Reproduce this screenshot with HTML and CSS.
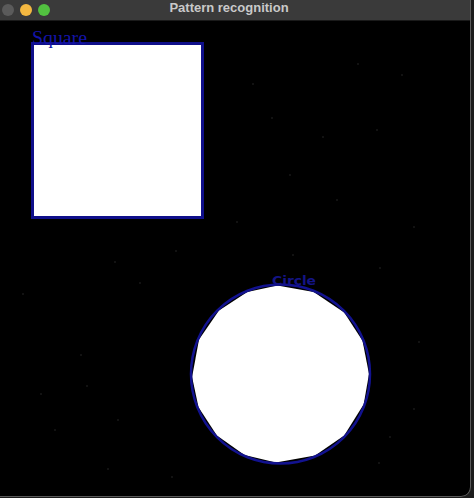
FILE: index.html
```html
<!DOCTYPE html>
<html>
<head>
<meta charset="utf-8">
<link rel="stylesheet" href="styles.css">
</head>
<body>
<div class="window">
  <div class="titlebar">
    <div class="lights">
      <span class="light grey"></span>
      <span class="light yellow"></span>
      <span class="light green"></span>
    </div>
    <div class="title">Pattern recognition</div>
  </div>
  <div class="canvas">
    <svg class="scene" width="469" height="474" viewBox="0 21 469 474" xmlns="http://www.w3.org/2000/svg">
      <rect x="0" y="21" width="469" height="474" fill="#000"/>
      <g fill="#2a2a2a">
        <circle cx="253" cy="84" r="0.8"/>
        <circle cx="358" cy="64" r="0.8"/>
        <circle cx="402" cy="75" r="0.8"/>
        <circle cx="272" cy="118" r="0.8"/>
        <circle cx="323" cy="137" r="0.8"/>
        <circle cx="377" cy="130" r="0.8"/>
        <circle cx="290" cy="175" r="0.8"/>
        <circle cx="337" cy="200" r="0.8"/>
        <circle cx="414" cy="227" r="0.8"/>
        <circle cx="237" cy="222" r="0.8"/>
        <circle cx="176" cy="251" r="0.8"/>
        <circle cx="115" cy="262" r="0.8"/>
        <circle cx="293" cy="255" r="0.8"/>
        <circle cx="380" cy="268" r="0.8"/>
        <circle cx="23" cy="294" r="0.8"/>
        <circle cx="140" cy="283" r="0.8"/>
        <circle cx="81" cy="355" r="0.8"/>
        <circle cx="87" cy="386" r="0.8"/>
        <circle cx="41" cy="394" r="0.8"/>
        <circle cx="118" cy="420" r="0.8"/>
        <circle cx="55" cy="430" r="0.8"/>
        <circle cx="419" cy="342" r="0.8"/>
        <circle cx="414" cy="409" r="0.8"/>
        <circle cx="390" cy="437" r="0.8"/>
        <circle cx="108" cy="469" r="0.8"/>
        <circle cx="172" cy="477" r="0.8"/>
        <circle cx="379" cy="463" r="0.8"/>
      </g>
      <rect x="32.5" y="43.5" width="170" height="174" fill="#fff" stroke="#0f0f8a" stroke-width="3"/>
      <text x="32" y="44" class="label-square" textLength="55" lengthAdjust="spacingAndGlyphs">Square</text>
      <polygon fill="#fff" points="369,374 363.7,404.3 344.2,435.5 315.1,455.5 275.9,462.4 244.5,454.9 216.9,435.5 198.5,407.2 192.1,377.1 199,339.4 219,310.4 247.3,292 277.4,285.6 313.7,292 344.2,312.5 362.5,340.8"/>
      <circle cx="280.5" cy="374" r="89.5" fill="none" stroke="#12128f" stroke-width="2.5"/>
      <text x="272" y="285" class="label-circle" textLength="44" lengthAdjust="spacingAndGlyphs">Circle</text>
    </svg>
  </div>
</div>
</body>
</html>
```
FILE: styles.css
```css
html, body {
  margin: 0;
  padding: 0;
}
body {
  width: 474px;
  height: 498px;
  background: #1c1c1c;
  overflow: hidden;
  display: flex;
  align-items: flex-start;
}
.window {
  width: 470px;
  height: 496px;
  display: flex;
  flex-direction: column;
  border-right: 1px solid #5a5a5a;
  border-bottom: 1px solid #5a5a5a;
  border-bottom-right-radius: 10px;
  overflow: hidden;
  background: #000;
}
.titlebar {
  height: 21px;
  background: #3a3a3a;
  display: flex;
  align-items: center;
  position: relative;
  border-bottom: 1px solid #1a1a1a;
  box-sizing: border-box;
}
.lights {
  display: flex;
  gap: 6px;
  padding-left: 2px;
}
.light {
  width: 12px;
  height: 12px;
  border-radius: 50%;
  display: block;
}
.light.grey { background: #5b5b5b; }
.light.yellow { background: #f4b841; }
.light.green { background: #52c140; }
.title {
  position: absolute;
  left: 0;
  right: 0;
  top: 0;
  height: 20px;
  line-height: 16px;
  text-align: center;
  font-family: "Liberation Sans", Arial, sans-serif;
  font-weight: bold;
  font-size: 13px;
  color: #c9c9c9;
  padding-right: 12px;
}
.canvas {
  flex: 1;
  display: flex;
}
.scene {
  display: block;
}
.label-square {
  font-family: "Liberation Serif", serif;
  font-size: 18px;
  fill: #1414a8;
}
.label-circle {
  font-family: "DejaVu Sans", sans-serif;
  font-size: 13px;
  font-weight: bold;
  fill: #141485;
}
```
